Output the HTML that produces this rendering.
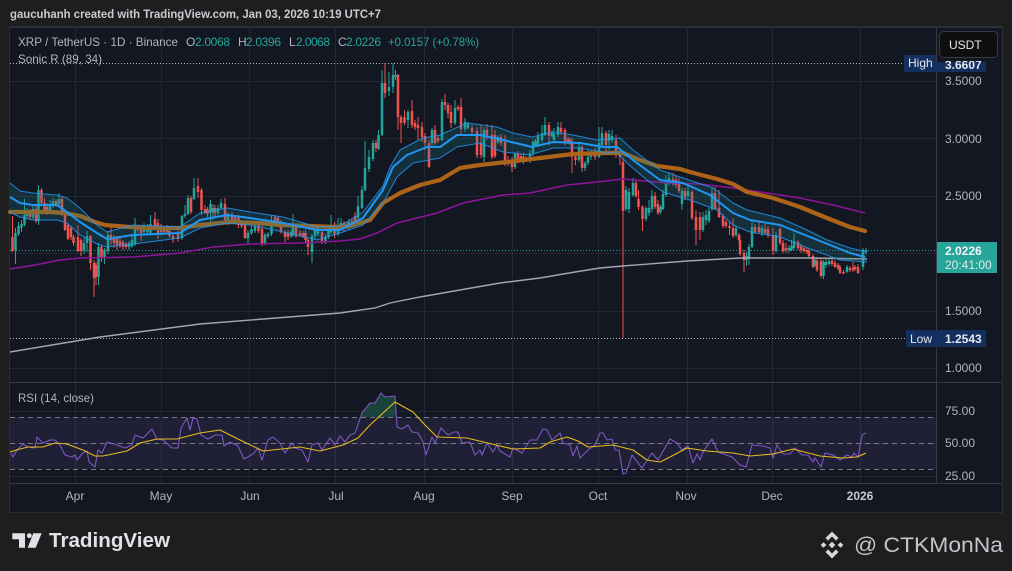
<!DOCTYPE html>
<html><head><meta charset="utf-8"><style>
html,body{margin:0;padding:0;background:#1e1e1e;width:1012px;height:571px;overflow:hidden}
svg{display:block}
text{font-family:"Liberation Sans",sans-serif}
</style></head><body>
<svg width="1012" height="571" viewBox="0 0 1012 571" xmlns="http://www.w3.org/2000/svg">
<defs><clipPath id="hv"><rect x="936" y="61" width="50" height="12"/></clipPath></defs>
<rect width="1012" height="571" fill="#1e1e1e"/>
<rect x="9.5" y="26.5" width="993" height="486" fill="#131722" stroke="#2a2e39"/>
<text x="10" y="18" font-size="11.5" font-weight="700" fill="#c8cbd2" textLength="371" lengthAdjust="spacingAndGlyphs">gaucuhanh created with TradingView.com, Jan 03, 2026 10:19 UTC+7</text>

<!-- grid -->
<g stroke="#2a2e39" stroke-width="1" opacity=".7">
<path d="M75.5 27V483M161.5 27V483M249.5 27V483M335.5 27V483M424.5 27V483M512.5 27V483M598.5 27V483M687.5 27V483M772.5 27V483M860.5 27V483"/>
<path d="M10 81.5H936M10 138.5H936M10 196.5H936M10 253.5H936M10 311.5H936M10 368.5H936M10 411.5H936M10 443.5H936M10 476.5H936"/>
</g>

<!-- dotted lines -->
<path d="M10 63.5H904" stroke="#b2b5be" stroke-dasharray="1 2" fill="none"/>
<path d="M10 338.5H906" stroke="#b2b5be" stroke-dasharray="1 2" fill="none"/>
<path d="M10 250.5H936" stroke="#26a69a" stroke-dasharray="1 2" fill="none"/>

<!-- candle wicks -->
<path shape-rendering="crispEdges" fill="none" stroke="#ef5350" stroke-width="1" d="M12.5 216V252M30 209V220M36 206V223M41.5 188V206M44.5 198V214M47 203V215M56 199V207M62 197V216M65 210V231M68 223V240M71 226V240M73.5 235V246M78 225V252M81 238V256M90.5 235V270M94 260V297M96 262V285M101.5 245V262M111 225V245M114 235V248M117 236V250M120 238V248M123 240V250M126 242V249M138 225V233M141 225V241M155 212V229M158 219V239M161 224V235M164 226V234M167 225V234M169.5 228V238M173 232V243M178 229V242M191 196V214M198 178V198M201.5 188V215M205 205V214M207.5 207V217M215 205V217M225 198V222M232 212V223M235 215V224M238.5 215V228M241.5 220V228M245 222V239M258.5 223V233M262 225V246M275 215V224M278 216V226M281 220V234M285 230V242M288 230V240M296 224V238M300 230V237M303 231V238M305.5 230V243M308 238V255M322 227V244M334.5 222V238M344 221V231M347 222V229M352 219V227M355 212V225M376 140V152M385 63V98M398 74V130M401 115V143M404.5 110V125M412 100V128M415 120V130M418 117V140M422 122V142M425 133V150M429 140V168M435 125V145M438 136V143M445 94V110M448 103V118M451 105V128M458 105V111M461 98V134M472 125V136M477 127V158M481 125V158M487 124V140M492 125V159M495 130V158M501 134V146M505 135V166M508 156V166M512 157V172M518 151V163M521 154V162M523.5 153V164M526 156V162M549 122V145M561 122V135M565 128V145M568 137V144M570 138V145M572 138V173M575.5 155V165M582 145V172M595 148V160M606 131V152M616 135V158M620 150V165M623 158V338M636 180V198M638.5 190V210M642.5 205V231M655 192V209M658 200V215M673 173V186M676 176V188M679 178V193M685 188V200M692 190V220M696 210V245M700 212V240M715 187V210M719 190V218M723 214V228M726 220V228M729.5 222V235M733 218V238M739 233V242M740 235V256M744 250V272M755 224V234M759 222V234M765 224V235M768 226V238M773 228V255M780 227V245M783 240V253M786 243V253M798 240V250M801 244V253M804 246V253M807 248V254M809 249V258M813 254V268M817 258V272M821 258V278M832 259V266M835 260V268M838 263V270M840 265V274M843.5 270V274M850 266V272M853 262V272M855 265V271M858 264V274"/>
<path shape-rendering="crispEdges" fill="none" stroke="#26a69a" stroke-width="1" d="M15.5 228V264M18.5 222V236M21.5 220V232M24.5 199V226M27 208V219M33 205V219M38.5 185V225M50 200V213M53 198V208M59 193V206M84 238V254M87 231V252M98.5 243V285M104.5 248V264M108 231V254M129 241V250M132 236V248M135 218V246M144 223V234M147.5 224V234M150.5 215V235M182 215V240M185 205V218M188 195V215M194 178V200M210.5 200V222M213 204V220M218 205V215M221 199V210M228 212V225M248 230V244M251.5 226V235M255 222V233M265 233V245M268 232V238M271.5 215V236M291 230V238M293 214V237M312 234V263M315 228V240M318 226V236M325.5 234V244M328.5 226V239M331 215V234M338 218V236M341 218V230M349 219V230M358 196V220M362 186V209M365 141V191M369 150V172M373 140V161M378.5 130V150M382 70V136M389 72V96M393 63V93M395.5 70V80M408 110V128M432 128V148M442 99V141M455 100V125M465 118V132M468 122V130M484 127V162M498 135V144M515 152V169M530 150V163M533 140V156M535.5 139V147M538 132V147M542 125V143M545 117V136M552 130V138M554 128V142M558 122V137M579 142V162M585 161V171M588 150V165M591 150V160M599 127V158M602 127V147M609 130V150M612 130V143M626 186V211M629 188V213M633 178V197M646 206V221M649 200V216M652 190V212M660.5 205V214M663 190V210M666 175V197M669 172V185M682 188V210M688 185V198M703 212V232M706 210V225M709 208V223M712 187V211M736 226V237M746.5 252V266M749 244V265M752 220V248M762 225V236M776 232V253M789 245V253M791.5 240V251M794 233V250M815 258V267M823.5 260V279M826 258V268M829 259V266M847 265V273M863 248V270M866 248V254"/>

<!-- candle bodies -->
<path fill="none" stroke="#ef5350" stroke-width="2.5" d="M12.5 237V251M30 212V217M36 209V221M41.5 190V203M44.5 203V210M47 207V212M56 201V204M62 199V214M65 213V230M68 225V239M71 228V237M73.5 237V243M78 237V251M81 240V251M90.5 236V263M94 263V278M96 265V277M101.5 247V258M111 235V240M114 238V243M117 238V245M120 241V246M123 242V247M126 244V247M138 228V230M141 228V233M155 219V227M158 223V233M161 228V232M164 229V232M167 229V232M169.5 231V236M173 236V239M178 233V239M191 198V212M198 186V192M201.5 190V210M205 209V213M207.5 209V214M215 208V213M225 204V220M232 215V220M235 217V222M238.5 217V225M241.5 222V226M245 224V238M258.5 225V231M262 229V243M275 217V222M278 218V224M281 222V232M285 232V237M288 233V237M296 226V236M300 233V235M303 233V236M305.5 233V240M308 240V247M322 232V242M334.5 225V234M344 223V228M347 224V227M352 221V225M355 216V223M376 143V148M385 83V93M398 75V117M401 117V123M404.5 117V123M412 111V125M415 123V127M418 125V128M422 127V137M425 136V143M429 143V167M435 130V143M438 138V141M445 102V105M448 105V113M451 112V123M458 107V109M461 107V129M472 128V132M477 131V155M481 143V155M487 130V135M492 135V157M495 135V156M501 137V143M505 142V160M508 160V163M512 160V167M518 154V160M521 156V160M523.5 157V162M526 158V160M549 125V136M561 128V132M565 130V142M568 139V142M570 140V143M572 142V157M575.5 157V160M582 147V168M595 152V157M606 133V145M616 140V155M620 152V157M623 162V211M636 183V196M638.5 199V207M642.5 207V219M655 196V207M658 204V213M673 179V184M676 180V185M679 183V191M685 191V197M692 192V218M696 217V230M700 217V230M715 193V209M719 208V217M723 216V226M726 222V226M729.5 226V228M733 228V236M739 235V240M740 240V254M744 253V260M755 227V232M759 227V232M765 229V233M768 229V235M773 235V251M780 229V243M783 243V251M786 248V250M798 242V248M801 246V250M804 248V251M807 250V252M809 251V256M813 256V267M817 261V270M821 261V276M832 261V264M835 263V267M838 265V268M840 267V273M843.5 272V273.5M850 268V270M853 268V270M855 267V269M858 267V273"/>
<path fill="none" stroke="#26a69a" stroke-width="2.5" d="M15.5 233V250M18.5 226V234M21.5 224V228M24.5 215V225M27 211V216M33 209V217M38.5 190V221M50 204V211M53 201V205M59 199V204M84 243V250M87 236V243M98.5 247V277M104.5 250V258M108 235V251M129 243V247M132 240V246M135 228V244M144 226V232M147.5 226V232M150.5 224V233M182 216V238M185 214V216M188 198V214M194 188V199M210.5 204V213M213 208V212M218 208V213M221 203V208M228 215V220M248 233V238M251.5 229V233M255 226V231M265 235V243M268 234V236M271.5 220V234M291 232V236M293 225V235M312 236V252M315 230V236M318 228V234M325.5 237V242M328.5 230V237M331 225V232M338 225V234M341 223V228M349 222V228M358 206V218M362 190V208M365 168V190M369 157V169M373 143V159M378.5 135V149M382 83V135M389 87V91M393 75V87M395.5 75V77M408 112V120M432 130V143M442 102V140M455 108V123M465 122V129M468 124V128M484 130V157M498 137V142M515 154V167M530 153V161M533 142V153M535.5 141V145M538 136V145M542 133V140M545 125V135M552 133V136M554 134V140M558 127V135M579 147V160M585 163V168M588 157V163M591 153V157M599 143V157M602 133V145M609 134V141M612 136V140M626 190V209M629 192V209M633 183V195M646 208V219M649 208V213M652 196V209M660.5 207V212M663 194V209M666 183V195M669 178V183M682 191V204M688 191V196M703 217V230M706 215V220M709 211V221M712 193V209M736 228V235M746.5 256V260M749 247V259M752 227V247M762 228V233M776 235V251M789 248V250M791.5 246V250M794 241V248M815 260V265M823.5 262V276M826 262V265M829 261V264M847 267V272M863 250V267M866 250V252"/>

<!-- moving averages -->
<polyline fill="none" stroke="#8e1599" stroke-width="1.5" points="10,269 35,265 60,260 80,258 133,257 180,253 213,247 250,244 300,243 340,241 360,239 377,233 397,223 437,213 463,203 503,195 530,193 567,185 597,182 623,179 667,183 700,184 733,188 767,193 800,198 833,205 865,213"/>
<polyline fill="none" stroke="#a4a6ae" stroke-width="1.4" points="10,352 100,337 200,324 340,313 375,308 390,303 420,297 460,290 500,283 540,278 575,272 600,268 623,266 687,261 740,258 767,258 813,258 867,259"/>
<polyline fill="none" stroke="#ad6318" stroke-width="4.2" stroke-linecap="round" stroke-linejoin="round" points="10,212 50,212 65,213 80,216 95,222 105,225 130,227 150,228 180,228 200,225 230,222 260,223 280,225 310,226 335,227 350,226 370,220 383,203 400,193 420,185 440,180 460,168 480,165 507,162 540,158 573,154 607,153 623,153 640,160 657,166 680,169 690,172 717,179 733,184 747,192 773,198 800,207 827,218 850,227 865,231"/>
<polygon fill="#23818f" fill-opacity=".24" points="10,183 20,191 33,193 57,195 67,198 80,208 97,225 107,232 133,225 180,227 200,213 227,208 250,212 283,217 317,227 340,226 363,212 383,186 390,167 400,150 423,138 440,135 467,123 497,127 513,133 532,137 553,132 573,135 597,140 620,138 633,150 660,170 680,177 713,188 733,203 747,210 780,218 807,230 827,240 850,248 867,252 867,262 840,260 813,250 780,237 750,232 733,225 717,210 690,200 663,192 647,180 627,163 617,152 607,153 580,148 553,148 530,155 503,152 480,143 457,147 440,158 413,163 397,177 383,203 363,225 340,233 317,240 283,232 250,225 227,223 200,228 180,238 133,244 107,247 97,244 80,235 67,223 57,220 33,220 20,217 10,212"/>
<g fill="none" stroke="#2196f3" stroke-linejoin="round">
<polyline stroke-width="1" stroke-opacity=".85" points="10,183 20,191 33,193 57,195 67,198 80,208 97,225 107,232 133,225 180,227 200,213 227,208 250,212 283,217 317,227 340,226 363,212 383,186 390,167 400,150 423,138 440,135 467,123 497,127 513,133 532,137 553,132 573,135 597,140 620,138 633,150 660,170 680,177 713,188 733,203 747,210 780,218 807,230 827,240 850,248 867,252"/>
<polyline stroke-width="2" points="10,197 20,203 33,205 57,205 67,212 80,222 97,233 107,239 133,235 180,233 200,220 227,215 250,218 283,223 317,230 340,230 363,218 383,190 393,167 407,155 427,147 440,147 457,135 480,135 503,140 532,147 553,142 580,143 603,147 617,147 633,160 660,180 683,183 710,195 733,213 750,220 780,225 810,237 830,245 850,253 865,257"/>
<polyline stroke-width="1" stroke-opacity=".85" points="10,212 20,217 33,220 57,220 67,223 80,235 97,244 107,247 133,244 180,238 200,228 227,223 250,225 283,232 317,240 340,233 363,225 383,203 397,177 413,163 440,158 457,147 480,143 503,152 530,155 553,148 580,148 607,153 617,152 627,163 647,180 663,192 690,200 717,210 733,225 750,232 780,237 813,250 840,260 867,262"/>
</g>

<!-- price axis -->
<path d="M936.5 27V483M10 483.5H1002M10 382.5H1002" stroke="#363a45" fill="none"/>
<path d="M10 27.5H1002" stroke="#2a2e39" fill="none"/>
<g font-size="12" fill="#b2b5be">
<text x="945" y="85">3.5000</text>
<text x="945" y="143">3.0000</text>
<text x="945" y="200">2.5000</text>
<text x="945" y="315">1.5000</text>
<text x="945" y="372">1.0000</text>
<text x="945" y="415">75.00</text>
<text x="945" y="447">50.00</text>
<text x="945" y="480">25.00</text>
</g>

<!-- High -->
<rect x="904" y="55" width="32" height="17" fill="#132f5e"/>
<rect x="936" y="62" width="50" height="10" fill="#132f5e"/>
<text x="908" y="67" font-size="12" fill="#e6e8ee">High</text>
<text x="945" y="69" font-size="12" font-weight="700" fill="#e6e8ee" clip-path="url(#hv)">3.6607</text>
<rect x="939.5" y="31.5" width="58" height="26" rx="4" fill="#0f0f0f" stroke="#363a45"/>
<text x="949" y="49" font-size="12" fill="#e4e6ea">USDT</text>

<!-- Price label -->
<rect x="937" y="242" width="60" height="31" fill="#26a69a"/>
<text x="945" y="255" font-size="12" font-weight="700" fill="#f4f5f7">2.0226</text>
<text x="945" y="269" font-size="12" fill="#e4e6ea">20:41:00</text>

<!-- Low -->
<rect x="906" y="330" width="80" height="17" fill="#132f5e"/>
<text x="910" y="343" font-size="12" fill="#e6e8ee">Low</text>
<text x="945" y="343" font-size="12" font-weight="700" fill="#e6e8ee">1.2543</text>

<!-- legend -->
<g font-size="12">
<text x="18" y="46" fill="#b2b5be" textLength="160" lengthAdjust="spacingAndGlyphs">XRP / TetherUS · 1D · Binance</text>
<text x="186" y="46" fill="#b2b5be">O</text><text x="195" y="46" fill="#26a69a" textLength="35">2.0068</text>
<text x="238" y="46" fill="#b2b5be">H</text><text x="246" y="46" fill="#26a69a" textLength="35">2.0396</text>
<text x="289" y="46" fill="#b2b5be">L</text><text x="296" y="46" fill="#26a69a" textLength="34">2.0068</text>
<text x="338" y="46" fill="#b2b5be">C</text><text x="346" y="46" fill="#26a69a" textLength="35">2.0226</text>
<text x="388" y="46" fill="#26a69a" textLength="91" lengthAdjust="spacingAndGlyphs">+0.0157 (+0.78%)</text>
<text x="18" y="63" fill="#b2b5be" textLength="84" lengthAdjust="spacingAndGlyphs">Sonic R (89, 34)</text>
<text x="18" y="402" fill="#b2b5be" textLength="76" lengthAdjust="spacingAndGlyphs">RSI (14, close)</text>
</g>

<!-- RSI pane -->
<rect x="10" y="417" width="926" height="52" fill="#7e57c2" fill-opacity=".12"/>
<path d="M10 417.5H936M10 443.5H936M10 469.5H936" stroke="#787b86" stroke-dasharray="5 4" fill="none"/>
<polygon fill="#1f5a4a" fill-opacity=".65" points="362,417 362,413 370,403 375,403 381,393 385,397 395,396 396,417"/>
<polyline fill="none" stroke="#7e57c2" stroke-width="1.1" stroke-linejoin="round" points="11,453 13,457 17,450 23,444 28,447 35,448 37,437 43,443 50,440 55,440 60,445 65,455 72,457 75,455 77,460 83,453 87,451 89,462 95,467 98,450 102,453 107,442 117,445 125,448 132,445 135,435 143,438 152,429 157,439 163,440 172,448 178,448 181,428 187,418 190,430 193,418 197,419 201,435 208,439 215,435 222,435 224,446 230,442 238,446 244,459 253,454 258,448 262,460 268,440 273,437 280,443 285,453 292,443 295,448 302,450 308,462 312,445 318,443 322,450 330,438 335,445 340,436 345,442 350,435 355,433 362,413 370,403 375,403 381,393 385,397 395,396 397,427 402,429 408,425 412,432 418,433 423,442 426,455 432,437 435,443 441,428 448,435 454,432 458,432 462,443 470,442 475,455 480,450 482,455 487,443 493,452 497,445 500,451 510,457 513,448 522,453 530,440 537,440 543,429 547,430 552,440 560,433 563,443 570,445 573,456 577,446 580,458 588,450 595,445 600,433 603,433 607,440 612,439 615,450 619,450 623,474 626,473 632,455 642,468 652,453 658,460 670,439 677,443 682,450 688,446 693,463 697,454 700,460 703,452 712,439 718,452 732,457 740,465 746,467 752,445 763,446 770,448 773,458 777,445 783,454 790,454 795,448 802,455 808,455 813,462 815,458 821,467 825,453 833,455 840,460 847,455 852,457 854,453 858,457 862,435 866,433"/>
<polyline fill="none" stroke="#e6bc1e" stroke-width="1.1" stroke-linejoin="round" points="10,452 20,449 28,447 43,447 55,443 67,444 83,450 95,456 103,456 127,451 140,443 157,439 177,439 200,433 220,430 240,440 263,451 300,447 320,451 343,445 358,438 370,425 395,402 413,412 425,425 437,437 467,438 500,446 513,449 540,448 550,442 567,437 578,441 588,447 613,445 633,450 647,460 660,462 670,457 687,448 707,451 733,453 750,456 773,454 793,449 820,456 843,458 857,457 866,453"/>

<!-- time axis -->
<g font-size="12" fill="#b2b5be" text-anchor="middle">
<text x="75" y="500">Apr</text>
<text x="161" y="500">May</text>
<text x="250" y="500">Jun</text>
<text x="336" y="500">Jul</text>
<text x="424" y="500">Aug</text>
<text x="512" y="500">Sep</text>
<text x="598" y="500">Oct</text>
<text x="686" y="500">Nov</text>
<text x="772" y="500">Dec</text>
<text x="860" y="500" font-weight="700" fill="#c8cad0">2026</text>
</g>

<!-- TradingView logo -->
<path fill="#dfe2e6" d="M12.3 533.3H25V547.7H19V539.3H12.3ZM33.3 533.3H41.7L35.7 547.7H27.7Z"/>
<circle cx="29.3" cy="535.7" r="2.4" fill="#dfe2e6"/>
<text x="49" y="547" font-size="20" font-weight="700" fill="#dfe2e6" textLength="121" lengthAdjust="spacingAndGlyphs">TradingView</text>

<!-- Binance + handle -->
<g fill="#d8d9dc">
<path d="M832 531.5L838.5 538L836 540.5L832 536.5L828 540.5L825.5 538Z"/>
<path d="M832 558.5L838.5 552L836 549.5L832 553.5L828 549.5L825.5 552Z"/>
<path d="M832 541.7L835.3 545L832 548.3L828.7 545Z"/>
<path d="M823.5 542.2L826.3 545L823.5 547.8L820.7 545Z"/>
<path d="M840.5 542.2L843.3 545L840.5 547.8L837.7 545Z"/>
</g>
<text x="854" y="552" font-size="21" fill="#c3c6cc" textLength="149" lengthAdjust="spacingAndGlyphs">@ CTKMonNa</text>
</svg>
</body></html>
